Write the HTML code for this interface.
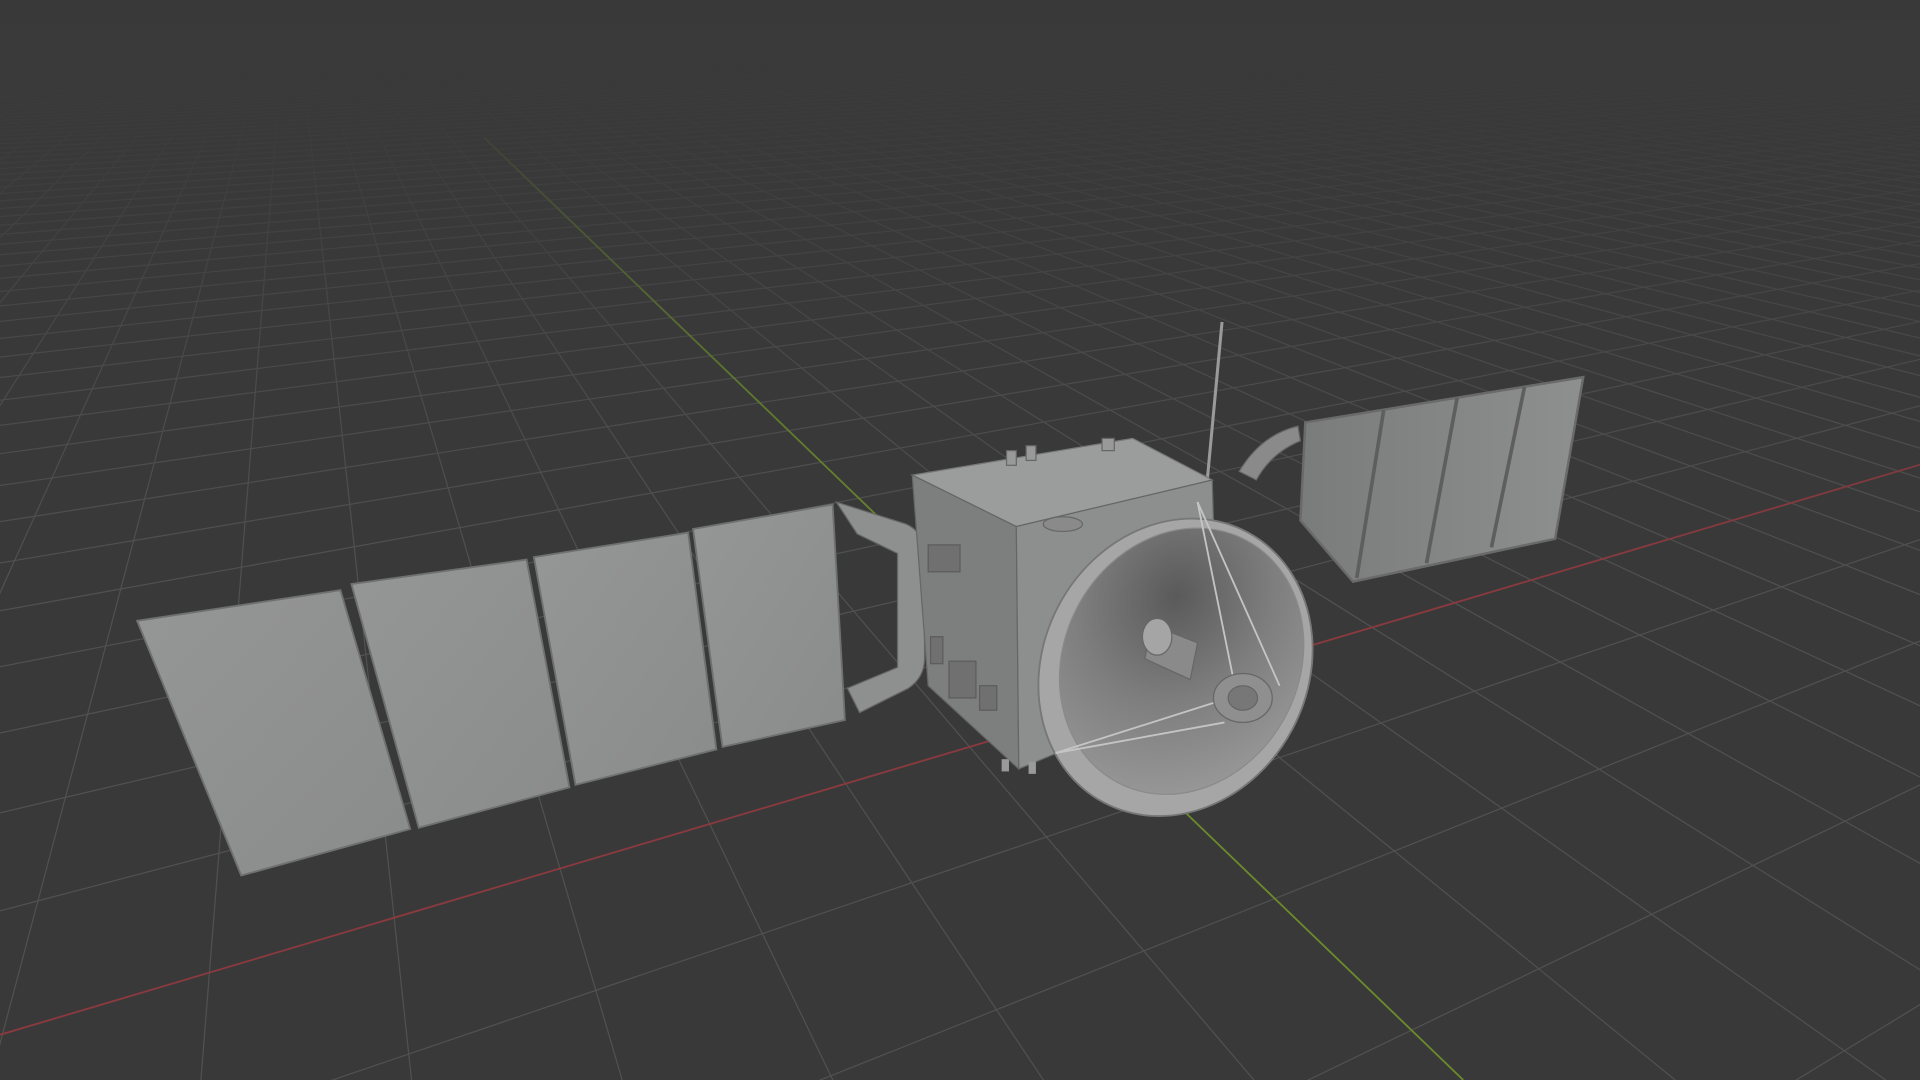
<!DOCTYPE html>
<html><head><meta charset="utf-8"><style>
html,body{margin:0;padding:0;background:#393939;overflow:hidden;width:1920px;height:1080px}
svg{display:block;position:absolute;left:0;top:0;overflow:hidden}
</style></head><body>
<svg id="s" width="1920" height="1080" viewBox="0 0 1568 882" xmlns="http://www.w3.org/2000/svg">
<defs>
<clipPath id="cp"><rect width="1568" height="882"/></clipPath>
<linearGradient id="fade" x1="0" y1="0" x2="0" y2="1">
<stop offset="0" stop-color="#393939" stop-opacity="1"/>
<stop offset="0.12" stop-color="#393939" stop-opacity="0.9"/>
<stop offset="0.35" stop-color="#393939" stop-opacity="0.25"/>
<stop offset="0.55" stop-color="#393939" stop-opacity="0"/>
</linearGradient>
<linearGradient id="pan" x1="0" y1="0" x2="1" y2="1">
<stop offset="0" stop-color="#959696"/><stop offset="1" stop-color="#8a8b8b"/>
</linearGradient>
<linearGradient id="panr" x1="0" y1="0" x2="1" y2="0">
<stop offset="0" stop-color="#7a7b7b"/><stop offset="1" stop-color="#8e8f8f"/>
</linearGradient>
<radialGradient id="dish" cx="0.35" cy="0.3" r="0.8">
<stop offset="0" stop-color="#5a5a5a"/><stop offset="0.5" stop-color="#7e7e7e"/><stop offset="1" stop-color="#9a9a9a"/>
</radialGradient>
</defs>
<rect width="1568" height="882" fill="#393939"/>
<g id="grid" stroke="#515151" stroke-width="1" fill="none" clip-path="url(#cp)"></g>
<line x1="-20" y1="851" x2="1600" y2="370" stroke="#8a3a3f" stroke-width="1.5"/>
<line x1="395" y1="112" x2="1195" y2="882" stroke="#6a8a2c" stroke-width="1.5"/>
<rect width="1568" height="882" fill="url(#fade)"/>

<g stroke="#6f7070" stroke-width="1.5" fill="url(#pan)">
<polygon points="112,507 278,482 335,677 197,715"/>
<polygon points="287,477 430,457 465,643 342,676"/>
<polygon points="436,455 562,435 585,612 470,641"/>
<polygon points="566,432 680,412 690,588 590,610"/>
</g>
<path d="M683,410 L740,428 Q755,435 755,452 L755,538 Q755,553 742,562 L702,582 L692,562 L733,545 L733,452 L700,436 Z" fill="#8e8f8f" stroke="#666" stroke-width="1"/>
<g stroke="#6a6a6a" stroke-width="2" fill="url(#panr)">
<polygon points="1066,345 1293,308 1270,440 1105,475 1062,425"/>
</g>
<g stroke="#5e5e5e" stroke-width="3">
<line x1="1130" y1="335" x2="1108" y2="472"/>
<line x1="1190" y1="325" x2="1165" y2="460"/>
<line x1="1245" y1="316" x2="1218" y2="447"/>
</g>
<path d="M1012,385 Q1030,355 1060,348 L1062,360 Q1038,370 1026,392 Z" fill="#8a8a8a" stroke="#666"/>
<line x1="998" y1="263" x2="985" y2="402" stroke="#9a9a9a" stroke-width="2.5"/>
<polygon points="745,388 925,358 990,392 830,430" fill="#9b9c9c" stroke="#777"/>
<polygon points="745,388 830,430 832,628 758,560" fill="#7c7f7e" stroke="#666"/>
<polygon points="830,430 990,392 995,560 832,628" fill="#8c8f8e" stroke="#666"/>
<ellipse cx="868" cy="428" rx="16" ry="6" fill="#8a8a8a" stroke="#666"/>
<g fill="#999" stroke="#666"><rect x="822" y="368" width="8" height="12"/><rect x="838" y="364" width="8" height="12"/><rect x="900" y="358" width="10" height="10"/></g>
<g fill="#707070" stroke="#5c5c5c"><rect x="760" y="520" width="10" height="22"/><rect x="775" y="540" width="22" height="30"/><rect x="800" y="560" width="14" height="20"/><rect x="758" y="445" width="26" height="22"/></g>
<ellipse cx="960" cy="545" rx="108" ry="125" transform="rotate(28 960 545)" fill="#a6a6a6" stroke="#777" stroke-width="1.5"/>
<ellipse cx="965" cy="540" rx="96" ry="112" transform="rotate(28 965 540)" fill="url(#dish)" stroke="#8a8a8a"/>
<g stroke="#c4c4c4" stroke-width="1.5" fill="none">
<line x1="978" y1="410" x2="1010" y2="568"/>
<line x1="978" y1="410" x2="1045" y2="560"/>
<line x1="862" y1="615" x2="1010" y2="568"/>
<line x1="862" y1="615" x2="1000" y2="590"/>
</g>
<ellipse cx="1015" cy="570" rx="24" ry="20" fill="#8f8f8f" stroke="#666"/>
<ellipse cx="1015" cy="570" rx="12" ry="10" fill="#777" stroke="#666"/>
<path d="M940,510 L978,525 L972,555 L935,538 Z" fill="#8a8a8a" stroke="#666"/>
<ellipse cx="945" cy="520" rx="12" ry="15" fill="#a5a5a5" stroke="#666"/>
<g fill="#9a9a9a"><rect x="818" y="620" width="6" height="10"/><rect x="840" y="622" width="6" height="10"/></g>
</svg>
<script>
(function(){
var g=document.getElementById('grid');
var Ox=884,Oy=582,Rx=2980,Ry=-40,Gx=237,Gy=-40,k1=0.0423,k2=0.098;
function P(u,v){var w=k1*u+k2*v+1;return [(k1*u*Rx+k2*v*Gx+Ox)/w,(k1*u*Ry+k2*v*Gy+Oy)/w];}
var s='';var N=120;
function seg(f){
 var pts=[];for(var t=-N;t<=N;t+=1){var uv=f(t);var w=k1*uv[0]+k2*uv[1]+1;if(w>0.03){var p=P(uv[0],uv[1]);if(p[0]>-3000&&p[0]<5000&&p[1]>-200&&p[1]<3000)pts.push(p[0].toFixed(1)+','+p[1].toFixed(1));}}
 if(pts.length>1)s+='<polyline points="'+pts.join(' ')+'"/>';
}
for(var i=-N;i<=N;i++){ if(i!==0){seg(function(t){return [t,i];});seg(function(t){return [i,t];});} }
g.innerHTML=s;
})();
</script>
</body></html>
